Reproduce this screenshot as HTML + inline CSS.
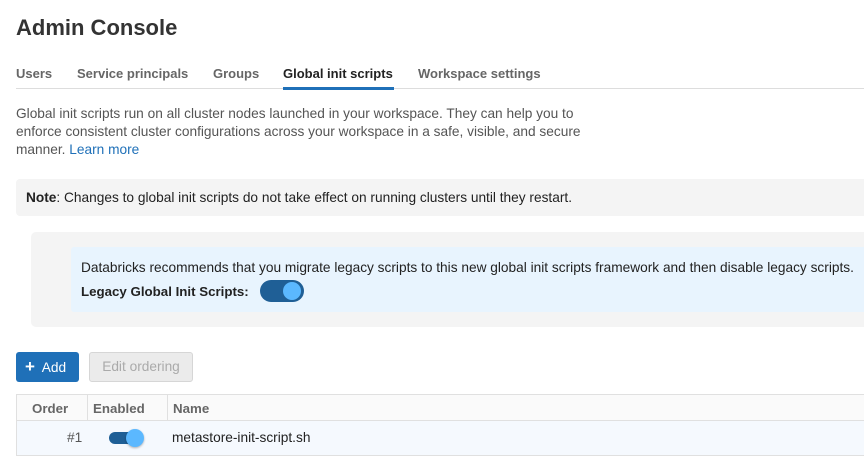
<!DOCTYPE html>
<html><head><meta charset="utf-8"><style>
*{box-sizing:border-box;margin:0;padding:0}
body{width:864px;height:460px;overflow:hidden;background:#fff;font-family:"Liberation Sans",sans-serif;color:#333;position:relative}
.a{position:absolute;white-space:nowrap}
h1{position:absolute;left:16px;top:15px;font-size:22px;font-weight:bold;color:#333}
.tab{position:absolute;top:66px;font-size:13px;font-weight:bold;color:#666}
.tog{position:absolute;border-radius:12px;background:#1f5f96}
.tog i{position:absolute;border-radius:50%;background:#5bb8ff}
.t{font-size:13.7px}
.tb{font-size:13.3px;font-weight:bold}
</style></head><body>
<h1>Admin Console</h1>
<div class="tab" style="left:16px">Users</div>
<div class="tab" style="left:77px">Service principals</div>
<div class="tab" style="left:213px">Groups</div>
<div class="tab" style="left:283px;color:#222">Global init scripts</div>
<div class="tab" style="left:418px">Workspace settings</div>
<div class="a" style="left:16px;top:88px;width:848px;height:1px;background:#ddd"></div>
<div class="a" style="left:283px;top:87px;width:111px;height:3px;background:#1f70b8"></div>
<div class="a t" style="left:16px;top:105px;line-height:18px;color:#555;white-space:normal;width:600px">Global init scripts run on all cluster nodes launched in your workspace. They can help you to<br>enforce consistent cluster configurations across your workspace in a safe, visible, and secure<br>manner. <span style="color:#1f70b8">Learn more</span></div>
<div class="a" style="left:16px;top:179px;width:860px;height:37px;background:#f4f4f4;border-radius:4px"></div>
<div class="a t" style="left:26px;top:190px;color:#222"><b>Note</b>: Changes to global init scripts do not take effect on running clusters until they restart.</div>
<div class="a" style="left:31px;top:232px;width:840px;height:95px;background:#f4f4f4;border-radius:5px"></div>
<div class="a" style="left:71px;top:247px;width:800px;height:65px;background:#e8f4fe;border-radius:3px"></div>
<div class="a t" style="left:81px;top:260px;color:#222">Databricks recommends that you migrate legacy scripts to this new global init scripts framework and then disable legacy scripts.</div>
<div class="a tb" style="left:81px;top:284px;color:#222">Legacy Global Init Scripts:</div>
<div class="tog" style="left:260px;top:280px;width:44px;height:22px"><i style="left:23px;top:2px;width:18px;height:18px"></i></div>
<div class="a" style="left:16px;top:352px;width:63px;height:30px;background:#1f70b8;border-radius:3px;color:#fff;font-size:13.7px;line-height:30px;padding-left:9px"><b style="font-size:17px">+</b>&nbsp; Add</div>
<div class="a" style="left:89px;top:352px;width:104px;height:30px;background:#ebebeb;border:1px solid #d6d6d6;border-radius:3px;color:#aaa;font-size:13.7px;line-height:28px;text-align:center">Edit ordering</div>
<div class="a" style="left:16px;top:394px;width:860px;height:62px;border:1px solid #e0e0e0"></div>
<div class="a" style="left:17px;top:395px;width:850px;height:26px;background:#fafafa;border-bottom:1px solid #e0e0e0"></div>
<div class="a" style="left:87px;top:395px;width:1px;height:26px;background:#e0e0e0"></div>
<div class="a" style="left:167px;top:395px;width:1px;height:26px;background:#e0e0e0"></div>
<div class="a tb" style="left:32px;top:401px;color:#666">Order</div>
<div class="a tb" style="left:93px;top:401px;color:#666">Enabled</div>
<div class="a tb" style="left:173px;top:401px;color:#666">Name</div>
<div class="a" style="left:17px;top:421px;width:850px;height:34px;background:#f5f9fe"></div>
<div class="a t" style="left:67px;top:430px;color:#555">#1</div>
<div class="tog" style="left:109px;top:432px;width:32px;height:12px"><i style="left:17px;top:-3px;width:18px;height:18px;box-shadow:0 1px 2px rgba(0,0,0,.3)"></i></div>
<div class="a t" style="left:172px;top:430px;color:#222">metastore-init-script.sh</div>
</body></html>
